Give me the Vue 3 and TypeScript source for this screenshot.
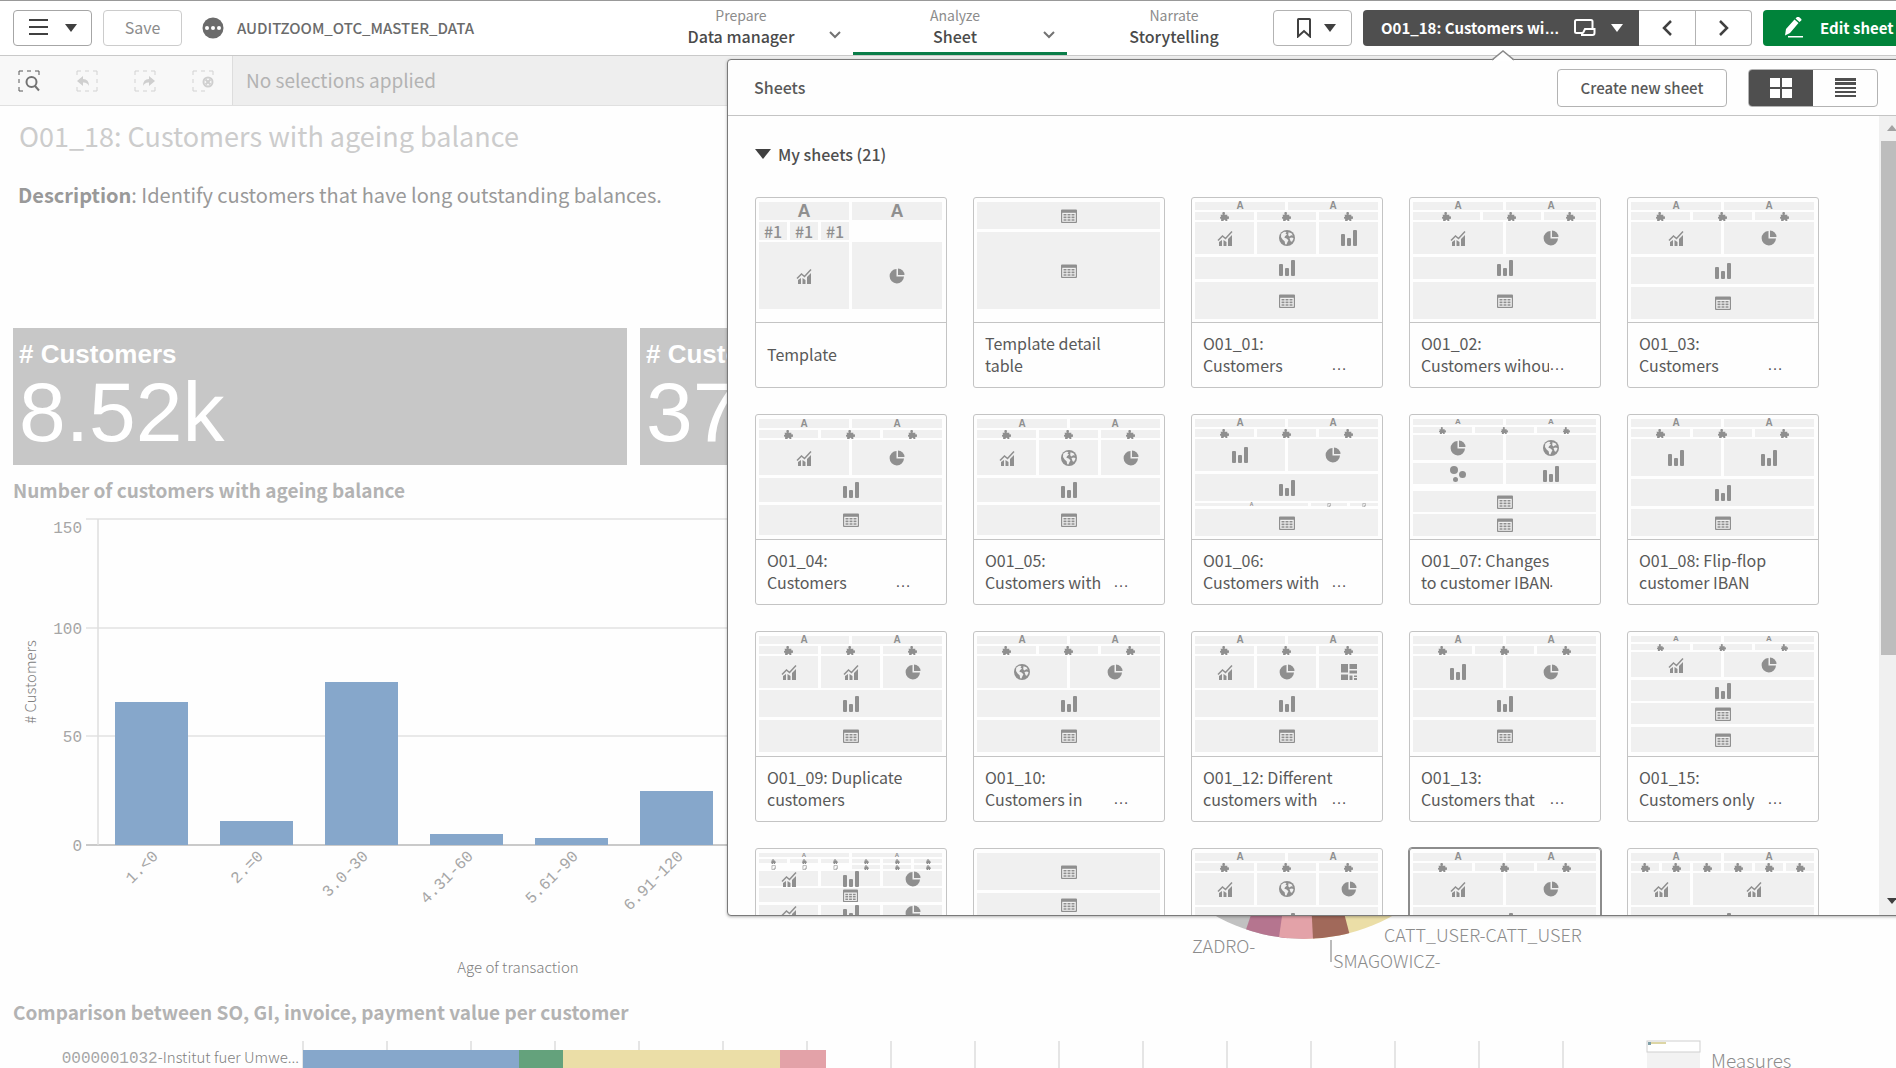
<script setup lang="ts">
interface Cell { icon?: string; grow?: number; blank?: boolean; cells?: string[] }
interface Row { h: number; cells: Cell[]; gap?: number }
interface Sheet { id: string; line1: string; line2?: string; tail?: string; rows: Row[]; selected?: boolean }

const c = (...icons: string[]): Cell[] => icons.map((icon) => ({ icon }))
const row = (h: number, gap: number, cells: Cell[]): Row => ({ h, gap, cells })

const head = (h1: number, h2: number, second: Cell[] = c('puzzle', 'puzzle', 'puzzle')): Row[] => [
  row(h1, 2, c('A', 'A')),
  row(h2, 2, second),
]
const uneven: Cell[] = [
  { icon: 'puzzle', grow: 67 },
  { icon: 'puzzle', grow: 59 },
  { icon: 'puzzle', grow: 52 },
]
const standard = (top: Cell[], h: number[] = [8, 8, 32, 27, 32], second?: Cell[], gap = 3): Row[] => [
  ...head(h[0], h[1], second),
  row(h[2], gap, top),
  row(h[3], 3, c('bar')),
  row(h[4], 0, c('table')),
]

const sheets: Sheet[] = [
  {
    id: 'template', line1: 'Template',
    rows: [
      row(18, 2, c('bigA', 'bigA')),
      row(18, 2, [{ cells: ['#1', '#1', '#1'] }, { blank: true }]),
      row(67, 0, c('line', 'pie')),
    ],
  },
  { id: 'detail', line1: 'Template detail', line2: 'table', rows: [row(27, 3, c('table')), row(77, 0, c('table'))] },
  { id: '01', line1: 'O01_01:', line2: 'Customers', tail: '…', rows: standard(c('line', 'globe', 'bar'), [8, 8, 32, 22, 37]) },
  { id: '02', line1: 'O01_02:', line2: 'Customers wihout', tail: '…', rows: standard(c('line', 'pie'), [8, 8, 32, 22, 37], uneven) },
  { id: '03', line1: 'O01_03:', line2: 'Customers', tail: '…', rows: standard(c('line', 'pie')) },
  { id: '04', line1: 'O01_04:', line2: 'Customers', tail: '…', rows: standard(c('line', 'pie'), [9, 8, 35, 24, 30]) },
  { id: '05', line1: 'O01_05:', line2: 'Customers with', tail: '…', rows: standard(c('line', 'globe', 'pie'), [9, 8, 35, 24, 30]) },
  {
    id: '06', line1: 'O01_06:', line2: 'Customers with', tail: '…',
    rows: [
      ...head(8, 8),
      row(32, 3, c('bar', 'pie')),
      row(27, 2, c('bar')),
      row(3, 3, [{ icon: 'A', grow: 113 }, { icon: 'doc', grow: 36 }, { icon: 'doc', grow: 28 }]),
      row(27, 0, c('table')),
    ],
  },
  {
    id: '07', line1: 'O01_07: Changes', line2: 'to customer IBAN', tail: '.',
    rows: [
      ...head(6, 6),
      row(25, 3, c('pie', 'globe')),
      row(21, 7, c('bubble', 'bar')),
      row(21, 2, c('table')),
      row(22, 0, c('table')),
    ],
  },
  { id: '08', line1: 'O01_08: Flip-flop', line2: 'customer IBAN', rows: standard(c('bar', 'bar'), [8, 8, 37, 27, 27]) },
  { id: '09', line1: 'O01_09: Duplicate', line2: 'customers', rows: standard(c('line', 'line', 'pie'), undefined, undefined, 2) },
  { id: '10', line1: 'O01_10:', line2: 'Customers in', tail: '…', rows: standard(c('globe', 'pie'), undefined, undefined, 2) },
  { id: '12', line1: 'O01_12: Different', line2: 'customers with', tail: '…', rows: standard(c('line', 'pie', 'tree'), undefined, undefined, 2) },
  { id: '13', line1: 'O01_13:', line2: 'Customers that', tail: '…', rows: standard(c('bar', 'pie'), undefined, undefined, 2) },
  {
    id: '15', line1: 'O01_15:', line2: 'Customers only', tail: '…',
    rows: [
      ...head(6, 6),
      row(25, 3, c('line', 'pie')),
      row(21, 2, c('bar')),
      row(21, 3, c('table')),
      row(25, 0, c('table')),
    ],
  },
  {
    id: '16', line1: 'O01_16:',
    rows: [
      row(4, 2, c('A', 'A')),
      row(4, 2, c('puzzle', 'puzzle', 'puzzle', 'puzzle', 'puzzle', 'puzzle')),
      row(4, 2, [
        { icon: 'doc', blank: true }, { icon: 'doc', blank: true }, { icon: 'doc', blank: true },
        ...c('puzzle', 'puzzle', 'puzzle'),
      ]),
      row(15, 2, c('line', 'bar', 'pie')),
      row(14, 3, c('table')),
      row(15, 2, c('line', 'bar', 'pie')),
      row(14, 0, c('table')),
    ],
  },
  { id: '17', line1: 'O01_17:', rows: [row(37, 3, c('table')), row(24, 3, c('table')), row(40, 0, c('table'))] },
  { id: '17b', line1: 'O01_17:', rows: standard(c('line', 'globe', 'pie'), undefined, undefined, 2) },
  { id: '18', line1: 'O01_18:', selected: true, rows: standard(c('line', 'pie'), undefined, undefined, 2) },
  {
    id: '19', line1: 'O01_19:',
    rows: standard(
      [{ icon: 'line', grow: 59 }, { icon: 'line', grow: 120 }],
      undefined,
      c('puzzle', 'puzzle', 'puzzle', 'puzzle', 'puzzle', 'puzzle'),
      2,
    ),
  },
]

const tinySize = (h: number): number => Math.min(h + 1, 9)
const iconSize = (icon: string, h: number): number =>
  icon === 'puzzle' || icon === 'doc' ? tinySize(h) : Math.min(16, h + 1)

const base = 341
const scale = 326 / 150
const ticks = [150, 100, 50, 0].map((v) => ({ v, y: Math.round(base - v * scale), ty: v === 150 ? 29 : Math.round(base - v * scale) + 6 }))
const bars = [
  { name: '1.<0', v: 66 },
  { name: '2.=0', v: 11 },
  { name: '3.0-30', v: 75 },
  { name: '4.31-60', v: 5 },
  { name: '5.61-90', v: 3 },
  { name: '6.91-120', v: 25 },
  { name: '7.>120', v: 12 },
].map((b, i) => ({ ...b, x: 102 + i * 105, y: Math.round(base - b.v * scale), h: Math.round(b.v * scale) }))

const segments = [
  { color: '#86a7cb', w: 216 },
  { color: '#64a27c', w: 44 },
  { color: '#ebdea7', w: 217 },
  { color: '#e3a2a8', w: 46 },
].reduce<{ color: string; w: number; x: number }[]>((acc, s) => {
  const last = acc[acc.length - 1]
  acc.push({ ...s, x: last ? last.x + last.w : 290 })
  return acc
}, [])
const guides = Array.from({ length: 16 }, (_, i) => 290 + i * 84)
</script>

<template>
  <div class="app">
    <svg class="defs" width="0" height="0" aria-hidden="true">
      <symbol id="i-bar" viewBox="0 0 16 16">
        <rect x="0" y="4" width="4" height="12" rx="1" /><rect x="6" y="8" width="4" height="8" rx="1" /><rect x="12" y="0" width="4" height="16" rx="1" />
      </symbol>
      <symbol id="i-line" viewBox="0 0 16 16">
        <path d="M1 10.5 5.5 6l3 2.5L15 1.5" fill="none" stroke="currentColor" stroke-width="1.5" />
        <path d="M2 16v-4l3-2v6zM6.5 16v-6l3 2v4zM11 16V9l4-4v11z" />
      </symbol>
      <symbol id="i-pie" viewBox="0 0 16 16">
        <path d="M7.5 1v7.5H15A7.2 7.2 0 1 1 7.5 1z" /><path d="M9 .5A6.5 6.5 0 0 1 15.5 7H9z" />
      </symbol>
      <symbol id="i-globe" viewBox="0 0 16 16">
        <circle cx="8" cy="8" r="8" />
        <path fill="#f0f0f0" d="M2.2 3.8 5 1.8l2.5.2-1 1.6 1.5 1-2 1.6-.6 1.6 2.2.8 1.800 1.600-1 2-1 2.400-1.200-.4-.6-3-2-1.800L2 7zM9.500 2.200l3 1 1.400 2.300-1.800-.3-1.600 1.200-1.300-1.200zM10.500 8l2.600-.6 1.500 1.200-1.600 3.200-1.400-.6z" />
      </symbol>
      <symbol id="i-table" viewBox="0 0 16 16">
        <path d="M1 1.5h14a1 1 0 0 1 1 1v11.5a1 1 0 0 1-1 1H1a1 1 0 0 1-1-1V2.5a1 1 0 0 1 1-1z" />
        <path fill="#f0f0f0" d="M1.2 4.8h13.6v9H1.2z" />
        <path d="M2.5 6h3v1.6h-3zM6.5 6h3v1.6h-3zM10.5 6h3v1.6h-3zM2.5 8.6h3v1.6h-3zM6.5 8.6h3v1.6h-3zM10.5 8.6h3v1.6h-3zM2.5 11.2h3v1.6h-3zM6.5 11.2h3v1.6h-3zM10.5 11.2h3v1.6h-3z" />
      </symbol>
      <symbol id="i-bubble" viewBox="0 0 16 16"><circle cx="4" cy="4" r="4" /><circle cx="12.5" cy="8.5" r="3.5" /><circle cx="5.5" cy="13.5" r="2.5" /></symbol>
      <symbol id="i-tree" viewBox="0 0 16 16"><path d="M0 0h7v8.5H0zM8.5 0H16v5H8.5zM8.5 6.5H16v3H8.5zM0 10.5h7V16H0zM8.5 11.5h3V16h-3zM13 11.5h3V13h-3zM13 14h3v2h-3z" /></symbol>
      <symbol id="i-puzzle" viewBox="0 0 16 16"><path d="M1 5h4C3.5 2 4 0 6.5 0S9.5 2 8 5h5v3c2-1 3 0 3 2s-1 3-3 2v4H9.5c1-3-4-3-3 0H2v-4c-3 0-3-4 0-3.500z" /></symbol>
      <symbol id="i-doc" viewBox="0 0 16 16"><path d="M3 2h11v9l-3 4H3zM10 15v-5h4" fill="none" stroke="currentColor" stroke-width="2" /></symbol>
    </svg>

    <header class="topbar">
      <div class="left">
        <button class="btn menu" aria-label="Menu">
          <svg width="20" height="20"><path d="M0 1h19v2H0zM0 8h19v2H0zM0 15h19v2H0z" fill="#404040" /></svg>
          <span class="caret"></span>
        </button>
        <button class="btn save">Save</button>
        <svg class="dots" width="22" height="22"><circle cx="11" cy="11" r="10.5" fill="#6b6b6b" /><g fill="#fff"><circle cx="5" cy="11" r="2" /><circle cx="11" cy="11" r="2" /><circle cx="17" cy="11" r="2" /></g></svg>
        <span class="app-name">AUDITZOOM_OTC_MASTER_DATA</span>
      </div>
      <nav class="tabs">
        <button class="tab">
          <span class="tab-text"><small>Prepare</small><b>Data manager</b></span>
          <svg width="12" height="8"><path d="m1 1 5 5 5-5" fill="none" stroke="#737373" stroke-width="2" /></svg>
        </button>
        <button class="tab active">
          <span class="tab-text"><small>Analyze</small><b>Sheet</b></span>
          <svg width="12" height="8"><path d="m1 1 5 5 5-5" fill="none" stroke="#737373" stroke-width="2" /></svg>
        </button>
        <button class="tab plain">
          <span class="tab-text"><small>Narrate</small><b>Storytelling</b></span>
        </button>
      </nav>
      <div class="right">
        <button class="btn bookmark" aria-label="Bookmarks">
          <svg width="14" height="20"><path d="M1 1.5q0-.5.5-.5h11q.5 0 .5.5V18.5L7 13l-6 5.5z" fill="none" stroke="#404040" stroke-width="2" /></svg>
          <span class="caret"></span>
        </button>
        <div class="switcher">
          <button class="current">
            <span class="label">O01_18: Customers wi<span class="dot3">…</span></span>
            <svg width="22" height="18"><path d="M9 14H2.5Q1 14 1 12.5v-10Q1 1 2.5 1H17q1.5 0 1.5 1.5V10M9 14l2-4h9.5v4q0 2-2 2H7" fill="none" stroke="#fff" stroke-width="2" /></svg>
            <span class="caret light"></span>
          </button>
          <button class="step" aria-label="Previous sheet"><svg width="12" height="16"><path d="M10 1 3 8l7 7" fill="none" stroke="#404040" stroke-width="2.5" /></svg></button>
          <button class="step" aria-label="Next sheet"><svg width="12" height="16"><path d="m2 1 7 7-7 7" fill="none" stroke="#404040" stroke-width="2.5" /></svg></button>
        </div>
        <button class="edit">
          <svg width="21" height="21"><path d="m3 12 8.5-9.5 4 3.5L7 16l-5 2.5zM12.5 1.5 14 0q1-.8 2 0l2 1.7q1 1 0 2L16.5 5zM5 19h15v1.5H5z" fill="#fff" /></svg>
          Edit sheet
        </button>
      </div>
    </header>

    <div class="selections">
      <div class="tools">
        <button aria-label="Smart search">
          <svg width="22" height="22"><path class="dash dark" d="M1 5V1h4M9 1h4M17 1h4v4M1 9v4M1 17v4h4" /><circle cx="13.5" cy="12" r="5" fill="none" stroke="#737373" stroke-width="2" /><path d="m17 16 4 4.5" stroke="#737373" stroke-width="2" /></svg>
        </button>
        <button aria-label="Step back">
          <svg width="22" height="22"><path class="dash" d="M1 5V1h4M9 1h4M17 1h4v4M21 9v4M21 17v4h-4M1 17v4h4M9 21h4" /><path d="m1 11 6-5v3q6 0 6 7-2-4-6-3.5V16z" fill="#cfcfcf" /></svg>
        </button>
        <button aria-label="Step forward">
          <svg width="22" height="22"><path class="dash" d="M1 5V1h4M9 1h4M17 1h4v4M1 9v4M21 17v4h-4M1 17v4h4M9 21h4" /><path d="m21 11-6-5v3q-6 0-6 7 2-4 6-3.5V16z" fill="#cfcfcf" /></svg>
        </button>
        <button aria-label="Clear all selections">
          <svg width="22" height="22"><path class="dash" d="M1 5V1h4M9 1h4M17 1h4v4M1 9v4M1 17v4h4M9 21h4" /><circle cx="16" cy="12" r="4.5" fill="none" stroke="#cfcfcf" stroke-width="2" /><path d="m13.5 9.5 5 5m0-5-5 5" stroke="#cfcfcf" stroke-width="2" /></svg>
        </button>
      </div>
      <span class="none">No selections applied</span>
    </div>

    <main class="sheet">
      <h1>O01_18: Customers with ageing balance</h1>
      <p class="desc"><b>Description</b>: Identify customers that have long outstanding balances.</p>
      <div class="kpis">
        <div class="kpi"><span># Customers</span><strong>8.52k</strong></div>
        <div class="kpi"><span># Customers</span><strong>37</strong></div>
        <div class="kpi"></div>
      </div>
      <h2>Number of customers with ageing balance</h2>
      <div class="charts">
        <svg class="chart">
          <g stroke="#dedede">
            <line v-for="t in ticks" :key="t.v" x1="73" :y1="t.y" x2="900" :y2="t.y" stroke-width="1.5" :stroke="t.v ? '#e2e2e2' : '#b8b8b8'" />
            <line x1="85" y1="15" x2="85" :y2="base" stroke-width="1.5" />
          </g>
          <text v-for="t in ticks" :key="t.v" class="num" x="69" :y="t.ty" text-anchor="end">{{ t.v }}</text>
          <g v-for="b in bars" :key="b.name">
            <rect :x="b.x" :y="b.y" width="73" :height="b.h" fill="#86a7cb" />
            <text class="num" text-anchor="end" :transform="`translate(${b.x + 44} ${base + 12}) rotate(-45)`">{{ b.name }}</text>
          </g>
          <text class="axis" text-anchor="middle" transform="translate(23 178) rotate(-90)"># Customers</text>
          <text class="axis" text-anchor="middle" x="505" y="469">Age of transaction</text>
        </svg>
        <svg class="chart">
          <clipPath id="disc"><circle cx="344" cy="255" r="180" /></clipPath>
          <g clip-path="url(#disc)">
            <rect x="164" y="75" width="180" height="360" fill="#c1c1c1" />
            <rect x="344" y="75" width="180" height="360" fill="#ebdea7" />
            <path d="M344 255 276 455h50z" fill="#b5758f" />
            <path d="M344 255 316 455h40z" fill="#e3a2a8" />
            <path d="M344 255 354 455h42z" fill="#a1695a" />
          </g>
          <path d="M371 436v22" stroke="#a5a5a5" stroke-width="1.5" />
          <text class="slice" x="232" y="449">ZADRO-</text>
          <text class="slice" x="373" y="464">SMAGOWICZ-</text>
          <text class="slice" x="424" y="438">CATT_USER-CATT_USER</text>
        </svg>
      </div>
      <h2>Comparison between SO, GI, invoice, payment value per customer</h2>
      <svg class="compare">
        <line v-for="x in guides" :key="x" :x1="x" y1="15" :x2="x" y2="42" stroke="#dcdcdc" stroke-width="1.5" />
        <text class="axis" x="286" y="37" text-anchor="end"><tspan class="num">0000001032</tspan>-Institut fuer Umwe...</text>
        <rect v-for="s in segments" :key="s.x" :x="s.x" y="24" :width="s.w" height="20" :fill="s.color" />
        <rect x="1634" y="25" width="53" height="20" fill="#f2f2f2" />
        <rect x="1634" y="15" width="53" height="11" fill="#fff" stroke="#cfcfcf" />
        <path d="M1635 16h3v3h-3z" fill="#7f9fa8" /><path d="M1638 16h15v2h-15z" fill="#ddd6a5" />
        <text class="legend" x="1698" y="42">Measures</text>
      </svg>
    </main>

    <section class="popover">
      <svg class="pointer" width="22" height="11"><path d="M0 11 11 1l11 10z" fill="#fff" /><path d="M0 10 11 1l11 9" fill="none" stroke="#8a8a8a" stroke-width="1.5" /></svg>
      <div class="pop-head">
        <span class="pop-title">Sheets</span>
        <button class="btn create">Create new sheet</button>
        <div class="views">
          <button class="on" aria-label="Grid view"><svg width="22" height="20"><path d="M0 0h10v9H0zM12 0h10v9H12zM0 11h10v9H0zM12 11h10v9H12z" fill="#fff" /></svg></button>
          <button aria-label="List view"><svg width="21" height="20"><path d="M0 0h21v3H0zM0 4h21v3H0zM0 9h21v2H0zM0 13h21v2H0zM0 17h21v2H0z" fill="#4f4f4f" /></svg></button>
        </div>
      </div>
      <div class="pop-body">
        <div class="list">
          <button class="group"><span class="caret"></span>My sheets (21)</button>
          <div class="grid">
            <button v-for="s in sheets" :key="s.id" class="card" :class="{ selected: s.selected }">
              <span class="thumb">
                <span v-for="(r, i) in s.rows" :key="i" class="row" :style="{ height: r.h + 'px', marginBottom: r.gap + 'px' }">
                  <span v-for="(k, j) in r.cells" :key="j" class="cell" :class="{ blank: k.blank || k.cells }" :style="{ flexGrow: k.grow ?? 1 }">
                    <template v-if="k.cells"><span v-for="(n, m) in k.cells" :key="m" class="cell hash">{{ n }}</span></template>
                    <span v-else-if="k.icon === 'bigA'" class="letter big">A</span>
                    <span v-else-if="k.icon === 'A'" class="letter" :style="{ fontSize: Math.min(r.h + 2, 10) + 'px' }">A</span>
                    <svg v-else-if="k.icon" :width="iconSize(k.icon, r.h)" :height="iconSize(k.icon, r.h)"><use :href="'#i-' + k.icon" /></svg>
                  </span>
                </span>
              </span>
              <span class="name">
                <span>{{ s.line1 }}</span>
                <span v-if="s.line2" class="second"><span class="clip">{{ s.line2 }}</span><span v-if="s.tail" class="tail">{{ s.tail }}</span></span>
              </span>
            </button>
          </div>
        </div>
        <div class="scroll">
          <span class="arrow up"></span>
          <span class="thumb-bar"></span>
          <span class="arrow down"></span>
        </div>
      </div>
    </section>
  </div>
</template>

<style>
html, body { overflow: hidden; background: #fefefe; }
</style>

<style scoped>
.app {
  position: relative;
  box-sizing: border-box;
  width: calc(100% + 24px);
  height: 100vh;
  overflow: hidden;
  background: #fefefe;
  font-family: "Noto Sans CJK SC", "Noto Sans", sans-serif;
  font-size: 16px;
  color: #595959;
}
.app *, .app *::before { box-sizing: border-box; }
.defs { position: absolute; }
button { margin: 0; padding: 0; border: 0; background: none; font: inherit; color: inherit; }
svg { display: block; flex: none; }
.topbar {
  display: grid;
  grid-template-columns: minmax(0, 1fr) auto minmax(0, 1fr);
  height: 56px;
  border-top: 1px solid #999;
  border-bottom: 1px solid #c9c9c9;
  background: #fff;
}
.left, .right { display: flex; align-items: center; padding: 0 13px; height: 53px; }
.left > *, .right > * { flex: none; }
.right { justify-content: flex-end; gap: 11px; }
.btn {
  display: flex;
  align-items: center;
  justify-content: center;
  height: 36px;
  border: 1px solid #b3b3b3;
  border-radius: 4px;
  background: #fff;
}
.menu { width: 79px; gap: 16px; border-color: #a6a6a6; }
.save { width: 79px; margin-left: 11px; padding-bottom: 2px; border-color: #ccc; color: #8c8c8c; }
.dots { margin-left: 20px; }
.app-name { margin-left: 13px; font-size: 15px; font-weight: 500; color: #6b6b6b; }
.caret { border: 6px solid transparent; border-top: 8px solid #404040; border-bottom: 0; }
.caret.light { border-top-color: #fff; }
.tabs { display: flex; }
.tab { display: flex; align-items: center; width: 214px; height: 54px; padding: 0 12px 2px 22px; gap: 8px; border-bottom: 3px solid transparent; }
.tab.plain { padding: 0 0 2px; }
.tab.active { border-color: #0a7d49; }
.tab svg { margin-top: 18px; }
.tab-text { display: flex; flex: 1; flex-direction: column; text-align: center; line-height: 22px; }
.tab-text small { font-size: 14px; line-height: 20px; color: #8c8c8c; }
.tab-text b { font-weight: 500; color: #4a4a4a; white-space: nowrap; }
.bookmark { width: 79px; padding-left: 8px; gap: 13px; }
.switcher { display: flex; height: 36px; }
.current {
  display: flex;
  align-items: center;
  width: 276px;
  padding: 0 16px 0 18px;
  border-radius: 4px 0 0 4px;
  background: #4f4f4f;
  color: #fff;
  font-size: 15px;
  font-weight: 700;
  gap: 15px;
  white-space: nowrap;
}
.label { flex: 1; text-align: left; }
.dot3, .tail { font-family: "Liberation Sans", Arial, sans-serif; }
.step { display: flex; align-items: center; justify-content: center; width: 57px; border: 1px solid #b3b3b3; border-left: 0; }
.step:last-child { width: 56px; border-radius: 0 4px 4px 0; }
.edit {
  display: flex;
  align-items: center;
  gap: 16px;
  width: 144px;
  height: 36px;
  padding-left: 20px;
  border-radius: 4px;
  background: #00833a;
  color: #fff;
  font-size: 15px;
  font-weight: 700;
  white-space: nowrap;
}
.selections { display: flex; height: 50px; border-bottom: 1px solid #e0e0e0; background: #eee; }
.tools { display: flex; align-items: center; gap: 36px; width: 233px; padding-left: 18px; border-right: 1px solid #ddd; background: #f8f8f8; }
.dash { fill: none; stroke: #d2d2d2; stroke-width: 1px; }
.dash.dark { stroke: #595959; }
.none { padding-left: 13px; font-size: 19px; line-height: 47px; color: #b3b3b3; }
.sheet { padding: 10px 39px 0 13px; }
h1 { margin: 0; padding-left: 6px; font-size: 27px; font-weight: 400; line-height: 40px; color: #ccc; }
.desc { margin: 25px 0 0; padding-left: 5px; font-size: 20px; line-height: 28px; color: #999; }
.kpis { display: grid; grid-template-columns: repeat(3, 1fr); gap: 13px; margin-top: 119px; }
.kpi { display: flex; flex-direction: column; height: 137px; padding: 10px 6px; background: #c7c7c7; color: #fff; font-family: "Liberation Sans", Arial, sans-serif; }
.kpi span { font-size: 26px; font-weight: 700; line-height: 32px; }
.kpi strong { font-size: 84px; font-weight: 400; line-height: 84px; }
h2 { margin: 0; font-size: 19px; font-weight: 700; line-height: 28px; color: #b3b3b3; }
.kpis + h2 { margin-top: 11px; }
.charts { display: grid; grid-template-columns: 1fr 1fr; height: 494px; gap: 26px; }
.chart { width: 100%; height: 494px; overflow: visible; }
.compare { width: 100%; height: 44px; overflow: visible; }
.num { font-family: "Liberation Mono", monospace; font-size: 16px; fill: #a6a6a6; }
.axis { font-size: 15px; font-weight: 300; fill: #808080; }
.slice { font-size: 18px; font-weight: 300; fill: #8c8c8c; }
.legend { font-size: 19px; font-weight: 300; fill: #8c8c8c; }
.popover {
  position: absolute;
  top: 59px;
  right: 17px;
  bottom: 152px;
  left: 727px;
  display: flex;
  flex-direction: column;
  border: 1px solid #7a7a7a;
  border-radius: 4px;
  background: #fefefe;
  box-shadow: 0 1px 3px rgba(0, 0, 0, 0.3);
}
.pointer { position: absolute; top: -10px; left: 764px; }
.pop-head { display: flex; align-items: center; height: 56px; padding: 0 24px 0 26px; border-bottom: 1px solid #c4c4c4; }
.pop-title { flex: 1; padding-bottom: 2px; font-weight: 500; }
.create { width: 170px; height: 38px; font-size: 15px; font-weight: 500; }
.views { display: flex; width: 130px; height: 38px; margin-left: 21px; border: 1px solid #b3b3b3; border-radius: 4px; overflow: hidden; }
.views button { display: flex; flex: 1; align-items: center; justify-content: center; }
.views .on { background: #4f4f4f; }
.pop-body { display: flex; flex: 1; min-height: 0; }
.list { flex: 1; padding: 25px 0 0 27px; overflow: hidden; }
.group { display: flex; align-items: center; gap: 7px; height: 26px; font-weight: 500; color: #4f4f4f; }
.group .caret { border-width: 10px 8px 0; }
.grid { display: grid; grid-template-columns: repeat(5, 192px); gap: 26px; margin-top: 30px; }
.card { display: flex; flex-direction: column; height: 191px; border: 1px solid #c4c4c4; border-radius: 3px; text-align: left; }
.card.selected { outline: 1px solid #8c8c8c; border-color: #8c8c8c; }
.thumb { display: block; width: 100%; height: 125px; padding: 4px 4px 0 3px; border-bottom: 1px solid #c4c4c4; color: #8f8f8f; fill: #8f8f8f; }
.row { display: flex; gap: 3px; }
.cell { display: flex; flex: 1 1 0; align-items: center; justify-content: center; min-width: 0; background: #f0f0f0; }
.cell.blank { gap: 3px; background: none; }
.hash { height: 100%; font-size: 16px; font-weight: 500; line-height: 18px; }
.letter { font-family: "Liberation Sans", Arial, sans-serif; font-weight: 700; line-height: 1; }
.letter.big { font-size: 18px; }
.name { display: flex; flex: 1; flex-direction: column; justify-content: center; padding: 0 0 2px 11px; line-height: 22px; white-space: nowrap; }
.second { display: flex; width: 145px; }
.clip { flex: 1; min-width: 0; overflow: hidden; }
.tail { width: 17px; }
.scroll { display: flex; flex-direction: column; align-items: center; width: 23px; padding: 9px 0 11px; border-left: 2px solid #f0f0f0; background: #f0f0f0; }
.arrow { border: 5px solid transparent; }
.arrow.up { border-top: 0; border-bottom: 6px solid #a3a3a3; }
.arrow.down { margin-top: auto; border-top: 6px solid #404040; border-bottom: 0; }
.thumb-bar { width: 100%; height: 66%; margin-top: 10px; background: #bdbdbd; }
</style>
